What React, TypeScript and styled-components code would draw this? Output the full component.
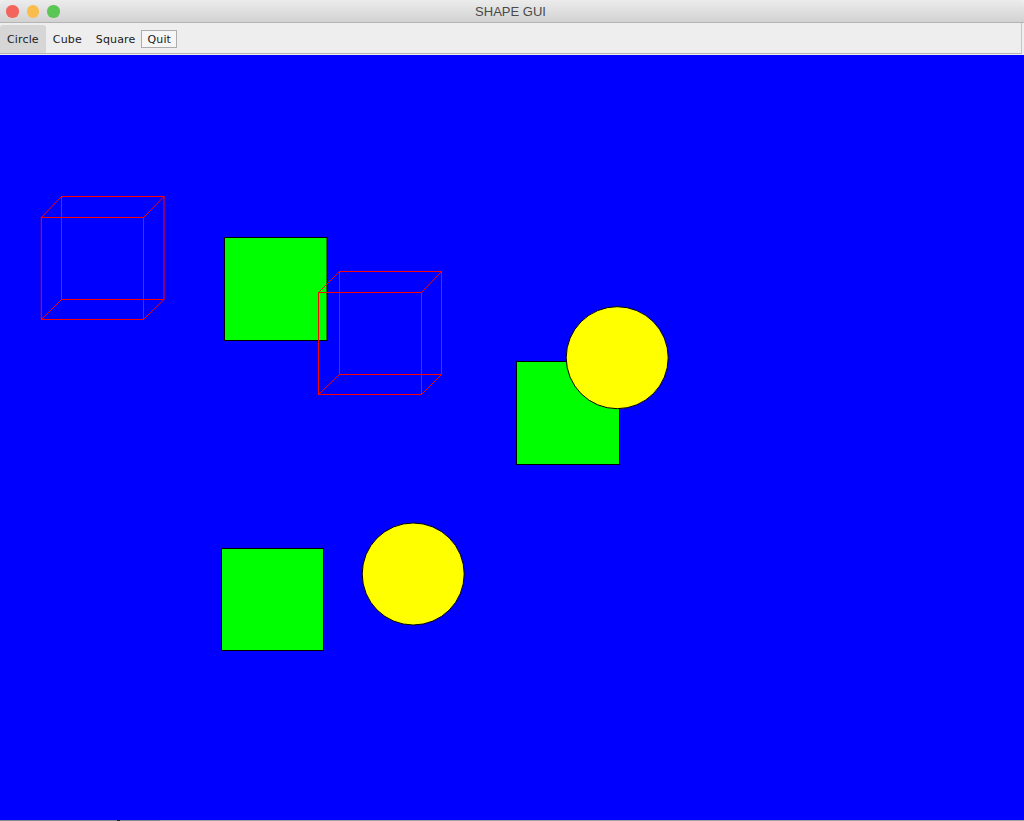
import React from "react";
import styled, { createGlobalStyle } from "styled-components";

const Global = createGlobalStyle`
  html, body { margin: 0; padding: 0; background: #0000ff; }
  #root { width: 1024px; height: 821px; overflow: hidden; }
`;

const Window = styled.div`
  width: 1024px;
  height: 821px;
  display: flex;
  flex-direction: column;
  background: #eeeeee;
`;

const TitleBar = styled.header`
  position: relative;
  height: 22px;
  flex: none;
  display: flex;
  align-items: center;
  justify-content: center;
  padding-right: 3px;
  background: linear-gradient(#ececec, #d2d2d2);
  border-bottom: 1px solid #b4b4b4;
  border-radius: 5px 5px 0 0;
`;

const Lights = styled.div`
  position: absolute;
  left: 6px;
  top: 5px;
  display: flex;
  gap: 8px;
`;

const Light = styled.span<{ $fill: string }>`
  width: 12.5px;
  height: 12.5px;
  border-radius: 50%;
  background: ${(p) => p.$fill};
`;

const Title = styled.h1`
  margin: 0;
  font: 400 13px "Liberation Sans", Arial, sans-serif;
  color: #4a4a4a;
`;

const MenuBar = styled.nav`
  height: 31px;
  flex: none;
  display: flex;
  align-items: flex-start;
  box-sizing: border-box;
  margin-right: 2px;
  padding-top: 2px;
  background: #eeeeee;
  border-right: 1px solid #c4c4c4;
  border-bottom: 1px solid #b4b4b4;
`;

const MenuItem = styled.button<{ $active?: boolean }>`
  all: unset;
  box-sizing: border-box;
  height: 28px;
  padding: 1px 7px 0;
  display: flex;
  align-items: center;
  font: 400 11px "DejaVu Sans", sans-serif;
  letter-spacing: 0.15px;
  color: #1a1a1a;
  background: ${(p) => (p.$active ? "#d6d6d6" : "transparent")};
  border-radius: 3px 3px 0 0;
`;

const QuitButton = styled.button`
  all: unset;
  box-sizing: border-box;
  height: 18px;
  margin: 5px 0 0 0;
  padding: 0 5px;
  display: flex;
  align-items: center;
  font: 400 11px "DejaVu Sans", sans-serif;
  letter-spacing: 0.15px;
  color: #1a1a1a;
  background: #f6f6f6;
  border: 1px solid #adadad;
  transform: translateX(-1px);
`;

const Spacer = styled.div`
  height: 1px;
  flex: none;
  background: #eeeeee;
`;

const Canvas = styled.svg`
  display: block;
  flex: 1;
  width: 1024px;
  min-height: 0;
  background: #0000ff;
`;

const BottomEdge = styled.div`
  height: 1px;
  flex: none;
  background: linear-gradient(
    to right,
    #8a8a96 117px,
    #20202a 117px,
    #20202a 120px,
    #8a8a96 120px,
    #8a8a96 160px,
    #a4a4a8 160px
  );
`;

type Box = { x: number; y: number; w: number; h: number };
type Cube = { front: Box; back: Box };

const Y = 55;

const cubes: Cube[] = [
  {
    front: { x: 41.3, y: 217.5 - Y, w: 102.2, h: 102 },
    back: { x: 61.5, y: 196.5 - Y, w: 102.5, h: 103 },
  },
  {
    front: { x: 318.5, y: 292.5 - Y, w: 103, h: 102 },
    back: { x: 339.5, y: 271.5 - Y, w: 102, h: 103 },
  },
];

const squares: Box[] = [
  { x: 224.5, y: 237.5 - Y, w: 102.5, h: 103 },
  { x: 516.5, y: 361.5 - Y, w: 103, h: 103 },
  { x: 221.5, y: 548.5 - Y, w: 102, h: 102 },
];

const circles = [
  { cx: 617.2, cy: 357.7 - Y },
  { cx: 413.2, cy: 574 - Y },
];

const CubeShape = ({ front: f, back: b }: Cube) => (
  <g fill="none" stroke="#ff0000" strokeWidth="1">
    <rect x={f.x} y={f.y} width={f.w} height={f.h} />
    <rect x={b.x} y={b.y} width={b.w} height={b.h} />
    <path
      d={`M${f.x} ${f.y}L${b.x} ${b.y}M${f.x + f.w} ${f.y}L${b.x + b.w} ${b.y}M${f.x} ${f.y + f.h}L${b.x} ${b.y + b.h}M${f.x + f.w} ${f.y + f.h}L${b.x + b.w} ${b.y + b.h}`}
    />
  </g>
);

export default function App() {
  return (
    <>
      <Global />
      <Window>
        <TitleBar>
          <Lights>
            <Light $fill="#f2645c" />
            <Light $fill="#f9bd4e" />
            <Light $fill="#5ac653" />
          </Lights>
          <Title>SHAPE GUI</Title>
        </TitleBar>
        <MenuBar>
          <MenuItem $active>Circle</MenuItem>
          <MenuItem>Cube</MenuItem>
          <MenuItem>Square</MenuItem>
          <QuitButton>Quit</QuitButton>
        </MenuBar>
        <Spacer />
        <Canvas viewBox="0 0 1024 765" preserveAspectRatio="xMinYMin">
          {squares.map((q) => (
            <rect key={q.x} x={q.x} y={q.y} width={q.w} height={q.h} fill="#00ff00" stroke="#000" strokeWidth="1" />
          ))}
          {cubes.map((c) => (
            <CubeShape key={c.front.x} {...c} />
          ))}
          {circles.map((c) => (
            <circle key={c.cx} cx={c.cx} cy={c.cy} r="51" fill="#ffff00" stroke="#000" strokeWidth="1" />
          ))}
        </Canvas>
        <BottomEdge />
      </Window>
    </>
  );
}
